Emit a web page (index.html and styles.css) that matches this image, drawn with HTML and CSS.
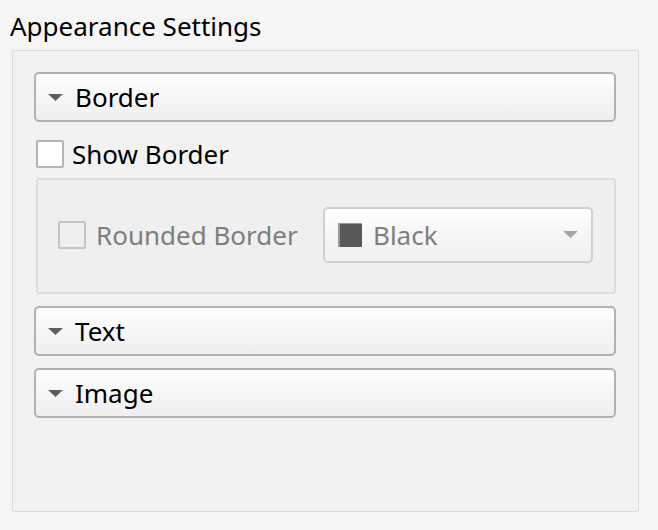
FILE: index.html
```html
<!DOCTYPE html>
<html lang="en">
<head>
<meta charset="utf-8">
<title>Appearance Settings</title>
<link rel="stylesheet" href="styles.css">
</head>
<body>
  <div class="title">Appearance Settings</div>
  <div class="group">
    <button class="section">
      <svg class="caret" width="15" height="7" viewBox="0 0 15 7"><path d="M0 0H15L7.5 7Z"/></svg>
      <span>Border</span>
    </button>

    <label class="check">
      <span class="box"></span>
      <span>Show Border</span>
    </label>

    <div class="subgroup">
      <label class="check disabled">
        <span class="box"></span>
        <span>Rounded Border</span>
      </label>
      <div class="combo">
        <span class="swatch"></span>
        <span class="combo-text">Black</span>
        <svg class="combo-arrow" width="15" height="7" viewBox="0 0 15 7"><path d="M0 0H15L7.5 7Z"/></svg>
      </div>
    </div>

    <button class="section gap">
      <svg class="caret" width="15" height="7" viewBox="0 0 15 7"><path d="M0 0H15L7.5 7Z"/></svg>
      <span>Text</span>
    </button>
    <button class="section gap">
      <svg class="caret" width="15" height="7" viewBox="0 0 15 7"><path d="M0 0H15L7.5 7Z"/></svg>
      <span>Image</span>
    </button>
  </div>
</body>
</html>
```

FILE: styles.css
```css
html, body {
  margin: 0;
  padding: 0;
  background: #f5f5f5;
  width: 658px;
  height: 530px;
  overflow: hidden;
  font-family: "Noto Sans", "Open Sans", sans-serif;
  font-size: 26px;
  color: #000;
}

.title {
  height: 50px;
  line-height: 52px;
  padding-left: 10px;
  box-sizing: border-box;
}

.group {
  margin-left: 12px;
  width: 627px;
  height: 462px;
  box-sizing: border-box;
  border: 1px solid #dadada;
  border-radius: 2px;
  background: #f2f2f2;
  padding: 21px 0 0 21px;
  display: flex;
  flex-direction: column;
  align-items: flex-start;
}

.section {
  width: 582px;
  height: 50px;
  box-sizing: border-box;
  border: 2px solid #b2b2b2;
  border-radius: 5px;
  background: linear-gradient(#ffffff, #f9f9f9 30%, #efefef);
  display: flex;
  align-items: center;
  padding: 0 0 0 12px;
  font: inherit;
  color: #000;
  margin: 0;
}

.section.gap {
  margin-top: 12px;
}

.caret {
  fill: #5e5e5e;
  margin-right: 12px;
  flex: none;
}

.check {
  display: flex;
  align-items: center;
  height: 28px;
  margin-top: 18px;
  margin-left: 2px;
}

.box {
  width: 24px;
  height: 24px;
  border: 2px solid #b4b4b4;
  border-radius: 2px;
  background: #fff;
  margin-right: 8px;
  flex: none;
}

.subgroup {
  margin-top: 10px;
  margin-left: 2px;
  width: 580px;
  height: 116px;
  box-sizing: border-box;
  border: 2px solid #dcdcdc;
  border-radius: 3px;
  background: #efefef;
  display: flex;
  align-items: center;
  justify-content: space-between;
  padding: 0 21px 3px 20px;
}

.check.disabled {
  margin: 0;
  color: #7e7e7e;
}

.check.disabled .box {
  background: transparent;
  border-color: #c4c4c4;
  margin-right: 10px;
}

.combo {
  width: 270px;
  height: 56px;
  box-sizing: border-box;
  border: 2px solid #cfcfcf;
  border-radius: 5px;
  background: linear-gradient(#ffffff, #f7f7f7 40%, #f0f0f0);
  display: flex;
  align-items: center;
  padding: 0 13px 0 13px;
  color: #7e7e7e;
}

.swatch {
  width: 24px;
  height: 24px;
  background: #585858;
  border-left: 2px solid #9a9a9a;
  border-top: 1px solid #9a9a9a;
  box-sizing: border-box;
  margin-right: 11px;
  flex: none;
}

.combo-text {
  flex: 1;
}

.combo-arrow {
  fill: #a6a6a6;
  flex: none;
}
```
